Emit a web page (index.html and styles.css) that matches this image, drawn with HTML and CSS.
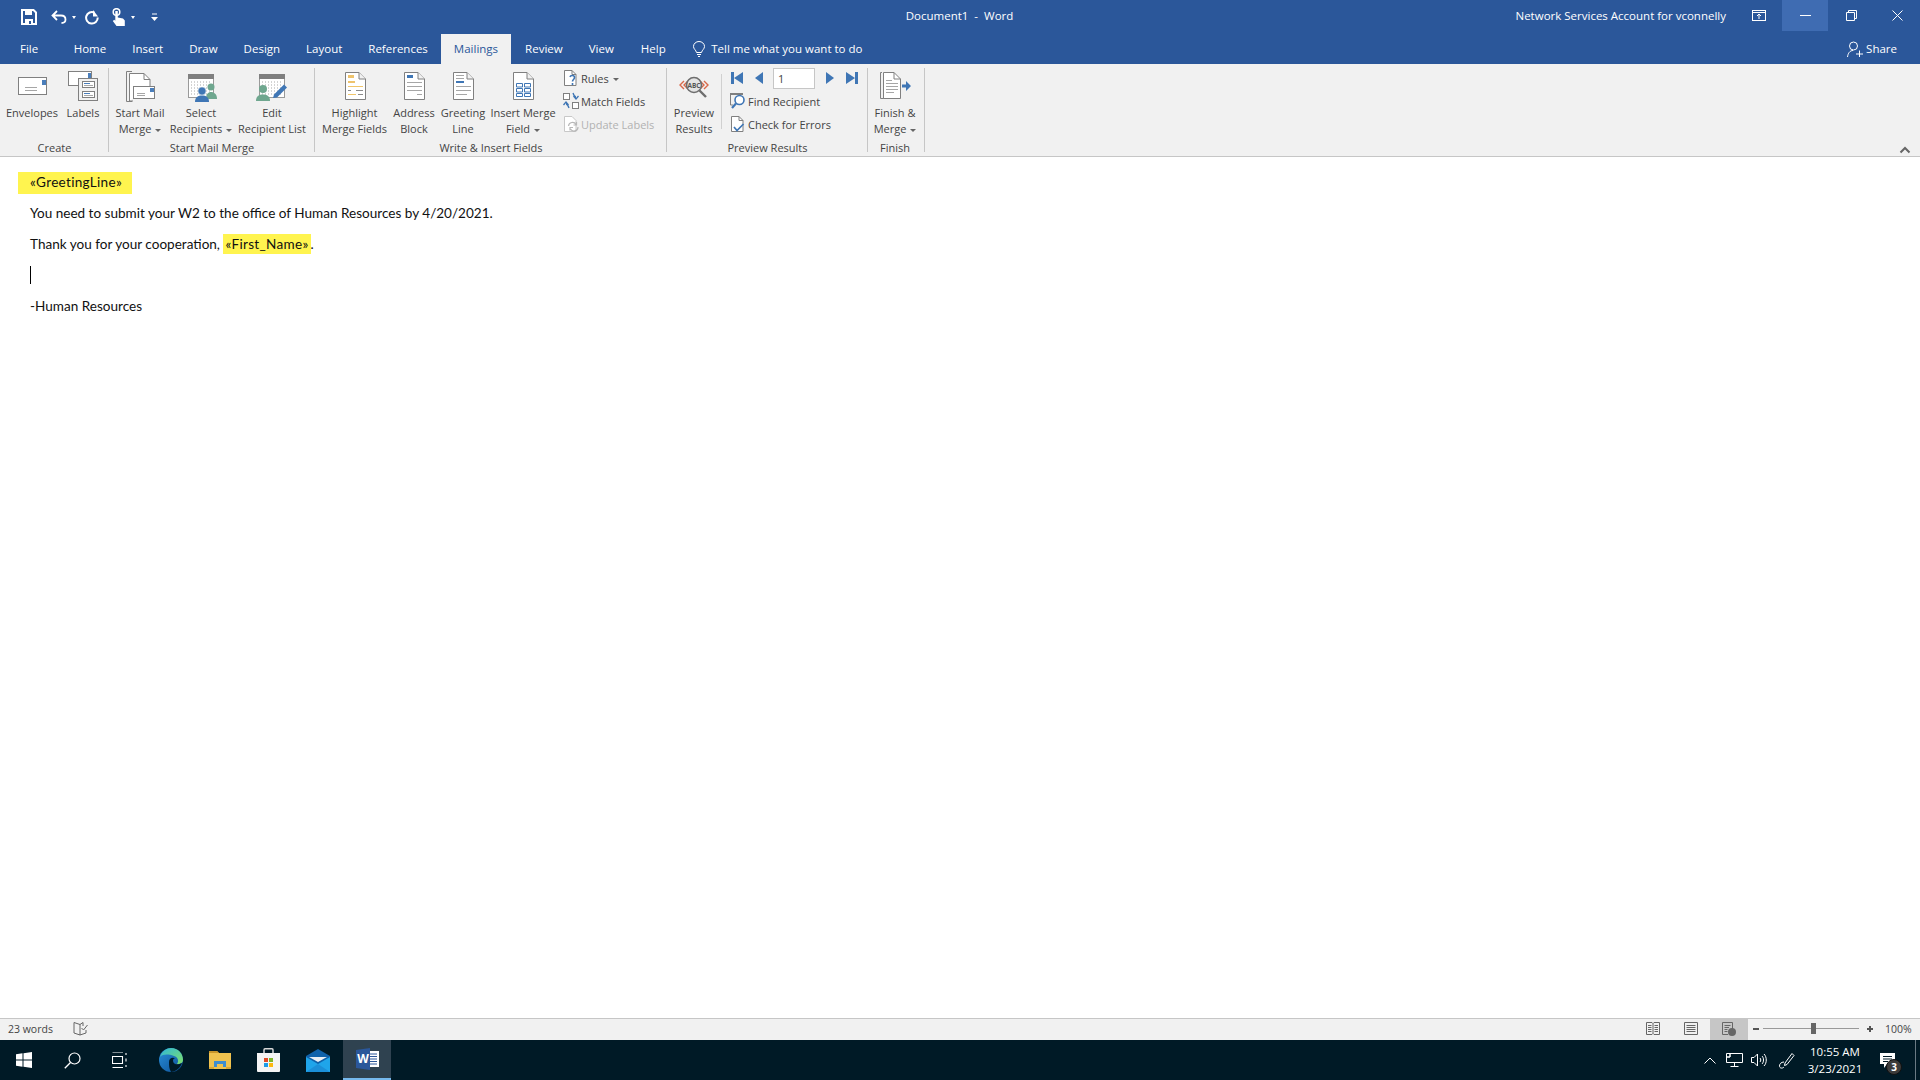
FILE: index.html
```html
<!DOCTYPE html>
<html>

<head>
    <title>Document1 - Word</title>
    <meta charset="utf-8">
    <link rel="stylesheet" href="styles.css">
</head>

<body>
    <svg class="defs" width="0" height="0">
        <symbol id="page" viewBox="0 0 32 36">
            <path d="M6.5 4.5H20L26.5 11V31.5H6.5Z" fill="#fff" stroke="#808080" />
            <path d="M20 4.5V11H26.5" fill="#f1f1f1" stroke="#808080" />
        </symbol>
        <symbol id="calendar" viewBox="0 0 32 36">
            <rect x="3.5" y="6.5" width="25" height="23" fill="#fff" stroke="#9a9a9a" />
            <rect x="3" y="6" width="26" height="5" fill="#7f7f7f" />
            <path d="M6 14H27M6 17H27M6 20H27M6 23H27M6 26H27" stroke="#a8a8a8" stroke-dasharray="1 2" />
        </symbol>
    </svg>

    <header class="titlebar">
        <div class="qat">
            <svg class="save" width="16" height="16" viewBox="0 0 16 16"><path d="M1 1H12.5L15 3.5V15H1Z" fill="none" stroke="#fff" stroke-width="2" /><rect x="4" y="1" width="7" height="5" fill="#fff" /><rect x="4" y="10" width="8" height="5" fill="#fff" /><rect x="8" y="12" width="2" height="3" fill="#2b579a" /></svg>
            <svg class="undo" width="16" height="14" viewBox="0 0 16 14"><path d="M6 1L1.5 5.5L6 10M2 5.5H10C13 5.5 14.5 7.5 14.5 9.5S13 13 10.5 13" fill="none" stroke="#fff" stroke-width="1.8" /></svg>
            <span class="caret white undo-caret"></span>
            <svg class="redo" width="14" height="15" viewBox="0 0 14 15"><path d="M9.5 2.6A5.8 5.8 0 1 0 12.7 7.5" fill="none" stroke="#fff" stroke-width="2" /><path d="M8 0V6.5H13Z" fill="#fff" /></svg>
            <svg class="touch" width="13" height="18" viewBox="0 0 13 18"><circle cx="4.500" cy="4" r="3.300" fill="none" stroke="#fff" stroke-width="1.500" /><path d="M3.300 3H5.800V9.500L11 10.500 12.800 12.500V18H4.500L.8 13 2.200 11.800 3.300 12.800Z" fill="#fff" /></svg>
            <span class="caret white touch-caret"></span>
            <svg class="customize" width="7" height="8" viewBox="0 0 7 8"><path d="M1 1H6" stroke="#fff" /><path d="M0 4H7L3.5 8Z" fill="#fff" /></svg>
        </div>
        <div class="doc-title">Document1&nbsp; -&nbsp; Word</div>
        <div class="window-area">
            <span class="account">Network Services Account for vconnelly</span>
            <svg class="display-opts" width="14" height="11" viewBox="0 0 14 11"><rect x=".5" y=".5" width="13" height="10" fill="none" stroke="#fff" /><path d="M.5 2.5H13.5M7 9V4.5M5 6L7 4L9 6" fill="none" stroke="#fff" /></svg>
            <div class="win-btn hover"><svg width="11" height="11" viewBox="0 0 11 11"><path d="M0 5.5H11" stroke="#fff" /></svg></div>
            <div class="win-btn"><svg width="11" height="11" viewBox="0 0 11 11"><path d="M.5 2.5H8.5V10.5H.5ZM2.5 2.5V.5H10.5V8.5H8.5" fill="none" stroke="#fff" /></svg></div>
            <div class="win-btn"><svg width="11" height="11" viewBox="0 0 11 11"><path d="M.5 .5L10.5 10.5M10.5 .5L.5 10.5" stroke="#fff" /></svg></div>
        </div>
    </header>

    <nav class="tabs">
        <a class="tab file">File</a>
        <a class="tab">Home</a>
        <a class="tab">Insert</a>
        <a class="tab">Draw</a>
        <a class="tab">Design</a>
        <a class="tab">Layout</a>
        <a class="tab">References</a>
        <a class="tab active">Mailings</a>
        <a class="tab">Review</a>
        <a class="tab">View</a>
        <a class="tab help">Help</a>
        <div class="tell">
            <svg width="12" height="16" viewBox="0 0 12 16"><path d="M3.5 11.5C3 9 .5 8 .5 5.5A5.5 5 0 0 1 11.5 5.5C11.5 8 9 9 8.500 11.500ZM4 13.500H8M5 15.500H7" fill="none" stroke="#fff" /></svg>
            <span>Tell me what you want to do</span>
        </div>
        <div class="share">
            <svg width="16" height="16" viewBox="0 0 16 16"><circle cx="6.500" cy="5" r="4" fill="none" stroke="#fff" /><path d="M.5 16C1 12 3 9.500 6 9.500M9 13H16M12.500 9.500V16" fill="none" stroke="#fff" /></svg>
            <span>Share</span>
        </div>
    </nav>

    <section class="ribbon">
        <div class="group g-create">
            <div class="group-body">
                <div class="big w-envelopes">
                    <svg class="icon" viewBox="0 0 32 36"><rect x="2.500" y="9.500" width="28" height="17" fill="#fff" stroke="#808080" /><rect x="26" y="12" width="4" height="5" fill="#4a7ebb" /><path d="M9 19.500H21M9 22.500H21" stroke="#a6a6a6" /></svg>
                    <span>Envelopes</span>
                </div>
                <div class="big w-labels">
                    <svg class="icon" viewBox="0 0 32 36"><rect x="1.500" y="3.500" width="23" height="14" fill="#fff" stroke="#808080" /><rect x="21" y="5" width="3" height="5" fill="#4a7ebb" /><rect x="11.500" y="10.500" width="19" height="22" fill="#f1f1f1" stroke="#808080" /><rect x="15.500" y="13.500" width="12" height="6" fill="#fff" stroke="#808080" /><rect x="15.500" y="23.500" width="12" height="6" fill="#fff" stroke="#808080" /><path d="M17 15.500H23M17 25.500H23" stroke="#4a7ebb" /><path d="M17 17.500H26M17 27.500H26" stroke="#a6a6a6" /></svg>
                    <span>Labels</span>
                </div>
            </div>
            <div class="group-label">Create</div>
        </div>

        <div class="group g-merge">
            <div class="group-body">
                <div class="big w-start">
                    <svg class="icon" viewBox="0 0 32 36"><path d="M8 3.500H2.500V33.500H8" fill="none" stroke="#808080" /><path d="M5.500 33V5.500H20L26 11.500V18M5.500 33H9" fill="#fff" stroke="#808080" /><path d="M20 5.500V11.500H26" fill="none" stroke="#808080" /><rect x="9.500" y="18.500" width="21" height="12" fill="#fff" stroke="#808080" /><rect x="26" y="20" width="4" height="4" fill="#4a7ebb" /><path d="M13 25.500H21M13 27.500H21" stroke="#a6a6a6" /></svg>
                    <span>Start Mail<br>Merge<i class="caret"></i></span>
                </div>
                <div class="big w-select">
                    <svg class="icon" viewBox="0 0 32 36"><use href="#calendar" width="32" height="36" /><circle cx="26" cy="19" r="3.500" fill="#6fa78f" /><path d="M21 31C21 26 23 24 26 24S32 26 32 31Z" fill="#6fa78f" /><circle cx="17" cy="23" r="4" fill="#3f76b5" stroke="#f1f1f1" stroke-width=".5" /><path d="M10 34C10 29 13 27.500 17 27.500S24 29 24 34Z" fill="#3f76b5" /></svg>
                    <span>Select<br>Recipients<i class="caret"></i></span>
                </div>
                <div class="big w-edit">
                    <svg class="icon" viewBox="0 0 32 36"><use href="#calendar" width="32" height="36" /><circle cx="7" cy="21" r="4" fill="#6fa78f" /><path d="M0 33C0 28 3 26.500 7 26.500S14 28 14 33Z" fill="#6fa78f" /><path d="M17 30L18 26.500L28 16.500L31 19.500L21 29.500Z" fill="#3f76b5" /></svg>
                    <span>Edit<br>Recipient List</span>
                </div>
            </div>
            <div class="group-label">Start Mail Merge</div>
        </div>

        <div class="group g-fields">
            <div class="group-body">
                <div class="big w-highlight">
                    <svg class="icon" viewBox="0 0 32 36"><use href="#page" width="32" height="36" /><path d="M9 7H15V10H9ZM9 13H16V15H9Z" fill="#eec36d" /><path d="M9 18.500H24M9 26.500H17" stroke="#f0c56a" /><path d="M9 22.500H12M17 22.500H24M19 26.500H24" stroke="#8a8a8a" /></svg>
                    <span>Highlight<br>Merge Fields</span>
                </div>
                <div class="big w-address">
                    <svg class="icon" viewBox="0 0 32 36"><use href="#page" width="32" height="36" /><rect x="9" y="7" width="6" height="3" fill="#3f76b5" /><path d="M9 14.500H24M9 18.500H24M9 22.500H24M19 26.500H24" stroke="#a6a6a6" /></svg>
                    <span>Address<br>Block</span>
                </div>
                <div class="big w-greeting">
                    <svg class="icon" viewBox="0 0 32 36"><use href="#page" width="32" height="36" /><rect x="9" y="13" width="8" height="2" fill="#3f76b5" /><path d="M9 7.500H17M9 10.500H17M9 18.500H24M9 22.500H24M9 26.500H20" stroke="#a6a6a6" /></svg>
                    <span>Greeting<br>Line</span>
                </div>
                <div class="big w-insert">
                    <svg class="icon" viewBox="0 0 32 36"><use href="#page" width="32" height="36" /><path d="M9.500 15.500H15.500V19H9.500ZM17.500 15.500H23.500V19H17.500ZM9.500 20.500H15.500V24H9.500ZM17.500 20.500H23.500V24H17.500ZM9.500 25.500H15.500V28.500H9.500ZM17.500 25.500H23.500V28.500H17.500Z" fill="#fff" stroke="#3f76b5" /></svg>
                    <span>Insert Merge<br>Field<i class="caret"></i></span>
                </div>
                <div class="small-col">
                    <div class="small">
                        <svg width="16" height="18" viewBox="0 0 16 18"><path d="M1.500 1.500H9L13 5.500V16.500H1.500Z" fill="#fff" stroke="#808080" /><path d="M9 1.500V5.500H13" fill="none" stroke="#808080" /><path d="M7 8C7.500 6 11.500 6 11.500 8.500C11.500 10.500 9.500 10.500 9.500 12.500M9.500 14V16" fill="none" stroke="#3f76b5" stroke-width="1.600" /></svg>
                        <span>Rules<i class="caret"></i></span>
                    </div>
                    <div class="small">
                        <svg width="16" height="18" viewBox="0 0 16 18"><rect x=".5" y="1.500" width="6" height="6" fill="#fff" stroke="#808080" /><rect x="9.500" y="10.500" width="6" height="6" fill="#fff" stroke="#808080" /><path d="M10 1C11 4 12 5 13 5M15.500 4L13 7L10.500 4M6 16C5 13 4 12 3 12M.5 13L3 10L5.500 13" fill="none" stroke="#3f76b5" stroke-width="1.300" /></svg>
                        <span>Match Fields</span>
                    </div>
                    <div class="small disabled">
                        <svg width="16" height="18" viewBox="0 0 16 18"><path d="M1.500 1.500H9L13 5.500V16.500H1.500Z" fill="#fff" stroke="#c8c8c8" /><path d="M5.500 11A4 4 0 0 1 13 9.500M15 12A4 4 0 0 1 7.500 14M13.500 7V10H10.500M7 15.500V12.500H10" fill="none" stroke="#b8b8b8" stroke-width="1.200" /></svg>
                        <span>Update Labels</span>
                    </div>
                </div>
            </div>
            <div class="group-label">Write &amp; Insert Fields</div>
        </div>

        <div class="group g-preview">
            <div class="group-body">
                <div class="big w-preview">
                    <svg class="icon" viewBox="0 0 32 36"><path d="M6 13L2 17L6 21M10 13L6 17L10 21M22 13L26 17L22 21M26 13L30 17L26 21" fill="none" stroke="#d9694a" stroke-width="1.400" /><circle cx="16" cy="17" r="7.500" fill="#e4e4e4" stroke="#6e6e6e" stroke-width="1.600" /><path d="M21.500 22.500L28 29" stroke="#6e6e6e" stroke-width="2.400" /><text class="abc" x="16" y="19.500" text-anchor="middle">ABC</text></svg>
                    <span>Preview<br>Results</span>
                </div>
                <span class="inner-sep"></span>
                <div class="preview-col">
                    <div class="nav-row">
                        <svg class="nav-first" width="12" height="12" viewBox="0 0 12 12"><path d="M0 0H3V12H0ZM12 0V12L3 6Z" fill="#3f76b5" /></svg>
                        <svg class="nav-prev" width="8" height="12" viewBox="0 0 8 12"><path d="M8 0V12L0 6Z" fill="#3f76b5" /></svg>
                        <div class="record">1</div>
                        <svg class="nav-next" width="8" height="12" viewBox="0 0 8 12"><path d="M0 0V12L8 6Z" fill="#3f76b5" /></svg>
                        <svg class="nav-last" width="12" height="12" viewBox="0 0 12 12"><path d="M0 0L9 6L0 12ZM9 0H12V12H9Z" fill="#3f76b5" /></svg>
                    </div>
                    <div class="small">
                        <svg width="17" height="18" viewBox="0 0 17 18"><path d="M1 2H14" stroke="#7f7f7f" stroke-width="2" /><path d="M1.500 3V13H4" fill="none" stroke="#808080" /><circle cx="10.500" cy="8" r="4.500" fill="#fff" stroke="#3f76b5" stroke-width="1.600" /><path d="M7 11.500L3 16" stroke="#3f76b5" stroke-width="2.200" /></svg>
                        <span>Find Recipient</span>
                    </div>
                    <div class="small">
                        <svg width="17" height="18" viewBox="0 0 17 18"><path d="M2.500 1.500H10L14 5.500V16.500H2.500Z" fill="#fff" stroke="#808080" /><path d="M10 1.500V5.500H14" fill="none" stroke="#808080" /><path d="M5 12L8 15.500L14.500 9" fill="none" stroke="#3f76b5" stroke-width="1.700" /></svg>
                        <span>Check for Errors</span>
                    </div>
                </div>
            </div>
            <div class="group-label">Preview Results</div>
        </div>

        <div class="group g-finish">
            <div class="group-body">
                <div class="big w-finish">
                    <svg class="icon" viewBox="0 0 32 36"><path d="M3 4.500H1.500V30.500H5" fill="none" stroke="#808080" /><path d="M4.500 4.500H15L21.500 11V30.500H4.500Z" fill="#fff" stroke="#808080" /><path d="M15 4.500V11H21.500" fill="none" stroke="#808080" /><path d="M7 12.500H13M7 15.500H19M7 18.500H19M7 21.500H19M7 24.500H15" stroke="#a6a6a6" /><path d="M23 16.500H27V13L32 18L27 23V19.500H23Z" fill="#3f76b5" /></svg>
                    <span>Finish &amp;<br>Merge<i class="caret"></i></span>
                </div>
            </div>
            <div class="group-label">Finish</div>
        </div>

        <svg class="collapse" width="12" height="8" viewBox="0 0 12 8"><path d="M1.500 6.500L6 2L10.500 6.500" fill="none" stroke="#666" stroke-width="2" /></svg>
    </section>

    <main class="document">
        <p><span class="field greeting">«GreetingLine»</span></p>
        <p>You need to submit your W2 to the office of Human Resources by 4/20/2021.</p>
        <p>Thank you for your cooperation, <span class="field">«First_Name»</span>.</p>
        <p class="cursor-line"><span class="cursor"></span></p>
        <p>-Human Resources</p>
    </main>

    <footer class="statusbar">
        <span class="words">23 words</span>
        <svg class="proof" width="15" height="14" viewBox="0 0 15 14"><path d="M7 2.500L1 .5V11L7 13ZM7 2.500L10 .5V4M7 13L13 11V8" fill="none" stroke="#666" /><path d="M8.500 6L10.500 8L14.500 3" fill="none" stroke="#666" /></svg>
        <div class="status-right">
            <svg class="view" width="14" height="13" viewBox="0 0 14 13"><path d="M.5 .5H6L7 1.500L8 .5H13.500V12.500H8L7 11.500L6 12.500H.5ZM7 1.500V11.500M2 3.500H5.500M2 5.500H5.500M2 7.500H5.500M2 9.500H5.500M8.500 3.500H12M8.500 5.500H12M8.500 7.500H12M8.500 9.500H12" fill="none" stroke="#666" /></svg>
            <svg class="view" width="14" height="13" viewBox="0 0 14 13"><path d="M.5 .5H13.500V12.500H.5ZM2.500 3.500H11.500M2.500 5.500H11.500M2.500 7.500H11.500M2.500 9.500H11.500" fill="none" stroke="#666" /></svg>
            <div class="view-on"><svg width="14" height="14" viewBox="0 0 14 14"><path d="M.5 .5H10.500V7M.5 .5V12.500H6M2.500 3.500H8.500M2.500 5.500H7M2.500 7.500H5.500M2.500 9.500H5.500" fill="none" stroke="#666" /><circle cx="10" cy="10" r="4" fill="#666" /></svg></div>
            <div class="zoom">
                <span class="zoom-minus"></span>
                <div class="slider"><span class="thumb"></span></div>
                <span class="zoom-plus"></span>
            </div>
            <span class="percent">100%</span>
        </div>
    </footer>

    <footer class="taskbar">
        <div class="task"><svg width="16" height="16" viewBox="0 0 16 16"><path d="M0 2.300L6.500 1.300V7.500H0ZM7.500 1.200L16 0V7.500H7.500ZM0 8.500H6.500V14.700L0 13.700ZM7.500 8.500H16V16L7.500 14.800Z" fill="#fff" /></svg></div>
        <div class="task"><svg width="17" height="17" viewBox="0 0 17 17"><circle cx="10.500" cy="6.500" r="5.500" fill="none" stroke="#fff" stroke-width="1.200" /><path d="M6.500 10.500L.8 16.200" stroke="#fff" stroke-width="1.300" /></svg></div>
        <div class="task taskview"><svg width="16" height="16" viewBox="0 0 16 16"><path d="M.5 0H11M.5 15.500H11M.5 4.500H10.500V11.500H.5ZM14 1V3M14 6.500V9.500M14 13V15" fill="none" stroke="#fff" stroke-width="1.100" /></svg></div>
        <div class="task"><svg width="24" height="24" viewBox="0 0 24 24"><defs><linearGradient id="edge" x1="0" y1="0" x2="1" y2="1"><stop offset="0" stop-color="#2a8fd8" /><stop offset="1" stop-color="#0b4f96" /></linearGradient><linearGradient id="edge2" x1="0" y1="0" x2="1" y2="1"><stop offset="0" stop-color="#2fb7d8" /><stop offset="1" stop-color="#7fe06a" /></linearGradient></defs><circle cx="12" cy="12" r="12" fill="url(#edge)" /><path d="M1 9C3 3 8 0 12 0C19 0 24 5 24 12C24 15 21 16.500 18 16C20 13 19 9 15 8C9 6 4 6 1 9Z" fill="url(#edge2)" /><path d="M10 14C10 10 14 9 16 10.500C14 10.500 13.500 12.500 14.500 14.500C15.500 16.500 19 17 23 15C21 21 15 24 12 24C10 21 10 17 10 14Z" fill="#001a26" /></svg></div>
        <div class="task"><svg width="22" height="18" viewBox="0 0 22 18"><path d="M0 0H8L10 2H22V18H0Z" fill="#f0c34f" /><path d="M0 0H8L10 2H0Z" fill="#c9962a" /><path d="M5 16V10H17V16H14V13H8V16Z" fill="#3f8ed0" /><path d="M0 16H5V18H0ZM17 16H22V18H17Z" fill="#d9a838" /></svg></div>
        <div class="task"><svg width="23" height="24" viewBox="0 0 23 24"><path d="M7 7V2Q7 .8 8 .8H15Q16 .8 16 2V7" fill="none" stroke="#d8d8d8" stroke-width="1.500" /><path d="M0 5H23V23Q23 24 22 24H1Q0 24 0 23Z" fill="#f4f4f4" /><rect x="7" y="10" width="4" height="4" fill="#e24a26" /><rect x="12" y="10" width="4" height="4" fill="#7fb72a" /><rect x="7" y="15" width="4" height="4" fill="#1c9be8" /><rect x="12" y="15" width="4" height="4" fill="#fcb80f" /></svg></div>
        <div class="task"><svg width="24" height="23" viewBox="0 0 24 23"><path d="M0 7L12 0L24 7V10L12 16L0 10Z" fill="#0f62ab" /><path d="M3 8H21L12 13Z" fill="#e8eef4" /><path d="M0 8L12 15L24 8V23H0Z" fill="#1fa5ea" /><path d="M0 23L12 15L24 23Z" fill="#1b8fd8" /></svg></div>
        <div class="task word"><svg width="23" height="22" viewBox="0 0 23 22"><rect x="11" y="3" width="12" height="16" fill="#fff" /><path d="M13 6H21M13 8.500H21M13 11H21M13 13.500H21M13 16H21" stroke="#2b579a" /><path d="M0 2L14 0V22L0 20Z" fill="#2b579a" /><text class="word-w" x="7" y="14.500" text-anchor="middle">W</text></svg></div>
        <div class="tray">
            <svg class="tray-chevron" width="12" height="7" viewBox="0 0 12 7"><path d="M.5 6.500L6 1L11.500 6.500" fill="none" stroke="#fff" /></svg>
            <svg class="tray-net" width="17" height="14" viewBox="0 0 17 14"><path d="M4 .5H16.500V9.500H.5V4H4ZM8.500 9.500V13M4.500 13.500H12.500M.5 .5H4V4H.5Z" fill="none" stroke="#fff" /></svg>
            <svg class="tray-sound" width="16" height="14" viewBox="0 0 16 14"><path d="M.5 4.500H3L6.500 1V13L3 9.500H.5ZM9 5C10 6 10 8 9 9M11 3C13 5 13 9 11 11M13 1C16 4 16 10 13 13" fill="none" stroke="#fff" /></svg>
            <svg class="tray-pen" width="16" height="17" viewBox="0 0 16 17"><path d="M6 11L13 1.500L15 3.500L8 12.500L5.500 13.500ZM5 10C2 10 .5 12 .5 14S3 17 5 15" fill="none" stroke="#fff" /></svg>
            <div class="clock"><div>10:55 AM</div><div>3/23/2021</div></div>
            <div class="notify">
                <svg width="15" height="15" viewBox="0 0 15 15"><path d="M0 0H15V11H7L4 15V11H0Z" fill="#fff" /><path d="M3 3.500H12M3 6H12M3 8.500H8" stroke="#001a26" /></svg>
                <span class="badge">3</span>
            </div>
            <span class="show-desktop"></span>
        </div>
    </footer>
</body></html>
```

FILE: styles.css
```css
* {
    box-sizing: border-box;
}

html,
body {
    margin: 0;
    height: 1080px;
    overflow: hidden;
}

body {
    display: flex;
    flex-direction: column;
    background: white;
    font-family: "Open Sans", sans-serif;
    font-size: 11px;
    color: #444;
}

.defs {
    position: absolute;
}

svg {
    display: block;
    flex: none;
}

/* title bar */
.titlebar {
    height: 34px;
    background: #2b579a;
    color: white;
    display: flex;
    align-items: flex-start;
    position: relative;
}

.qat {
    width: 600px;
    height: 34px;
    display: flex;
    align-items: center;
    padding-left: 21px;
}

.undo {
    margin-left: 14px;
}

.qat .undo-caret {
    margin-left: 5px;
}

.redo {
    margin-left: 9px;
}

.touch {
    margin-left: 13px;
}

.qat .touch-caret {
    margin-left: 6px;
}

.customize {
    margin-left: 16px;
}

.doc-title {
    width: 719px;
    height: 31px;
    line-height: 32px;
    text-align: center;
    font-size: 11.5px;
}

.window-area {
    flex: 1;
    display: flex;
    align-items: center;
    justify-content: flex-end;
    height: 31px;
}

.account {
    font-size: 11.5px;
    margin-right: 26px;
}

.display-opts {
    margin-right: 16px;
}

.win-btn {
    width: 46px;
    height: 31px;
    display: flex;
    align-items: center;
    justify-content: center;
}

.win-btn.hover {
    background: #3f6cb2;
}

/* tabs */
.tabs {
    height: 30px;
    background: #2b579a;
    color: white;
    display: flex;
    align-items: stretch;
    font-size: 11.5px;
}

.tab {
    padding: 0 13px;
    line-height: 29px;
    white-space: nowrap;
}

.tab.file {
    padding: 0 22.5px 0 20px;
}

.tab.active {
    background: #f1f1f1;
    color: #2b579a;
    margin-right: 1px;
}

.tab.help {
    margin-left: 1px;
}

.tell {
    display: flex;
    align-items: center;
    gap: 6px;
    margin-left: 14.5px;
    padding-bottom: 1px;
}

.share {
    margin-left: auto;
    display: flex;
    align-items: center;
    gap: 3px;
    padding-right: 23px;
    padding-bottom: 1px;
}

/* ribbon */
.ribbon {
    height: 93px;
    background: #f1f1f1;
    border-bottom: 1px solid #c6c6c6;
    display: flex;
    position: relative;
}

.group {
    display: flex;
    flex-direction: column;
    position: relative;
}

.group::after {
    content: "";
    position: absolute;
    right: 0;
    top: 4px;
    bottom: 4px;
    width: 1px;
    background: #c6c6c6;
}

.g-create {
    width: 109px;
}

.g-merge {
    width: 206px;
    padding-left: 6px;
}

.g-fields {
    width: 352px;
    padding-left: 6px;
}

.g-preview {
    width: 201px;
}

.g-finish {
    width: 57px;
}

.group-body {
    height: 73px;
    display: flex;
}

.group-label {
    height: 16px;
    margin-top: 3px;
    line-height: 16px;
    text-align: center;
}

.g-merge .group-label,
.g-fields .group-label {
    margin-left: -6px;
}

.g-finish .group-label {
    padding-right: 3px;
}

.big {
    display: flex;
    flex-direction: column;
    align-items: center;
    text-align: center;
    line-height: 16px;
    white-space: nowrap;
    padding-top: 4px;
}

.big .icon {
    width: 32px;
    height: 36px;
    margin-bottom: 1px;
}

.w-envelopes {
    width: 64px;
}

.w-labels {
    width: 38px;
}

.w-start {
    width: 50px;
}

.w-select {
    width: 72px;
}

.w-edit {
    width: 70px;
}

.w-highlight {
    width: 67px;
}

.w-address {
    width: 52px;
}

.w-greeting {
    width: 46px;
}

.w-insert {
    width: 74px;
}

.w-preview {
    width: 54px;
}

.w-finish {
    width: 54px;
}

.caret {
    display: inline-block;
    width: 0;
    height: 0;
    margin-left: 4px;
    vertical-align: middle;
    border-left: 3px solid transparent;
    border-right: 3px solid transparent;
    border-top: 3px solid #666;
}

.caret.white {
    border-left-width: 2.5px;
    border-right-width: 2.5px;
    border-top-color: white;
    margin-top: 1px;
}

.small-col {
    display: flex;
    flex-direction: column;
    padding-top: 2.5px;
    margin-left: 3px;
}

.small {
    height: 23px;
    display: flex;
    align-items: center;
    gap: 2px;
    white-space: nowrap;
}

.disabled {
    color: #b1b1b1;
}

.inner-sep {
    width: 1px;
    height: 55px;
    margin-top: 10px;
    background: #d0d0d0;
}

.preview-col {
    display: flex;
    flex-direction: column;
    padding-top: 2.5px;
    padding-left: 7px;
}

.nav-row {
    height: 23px;
    display: flex;
    align-items: center;
    padding-left: 2px;
}

.nav-prev {
    margin-left: 12px;
}

.record {
    width: 42px;
    height: 21px;
    margin-left: 10px;
    padding-left: 4px;
    line-height: 20px;
    background: white;
    border: 1px solid #c6c6c6;
}

.nav-next {
    margin-left: 11px;
}

.nav-last {
    margin-left: 12px;
}

.abc {
    font-family: "Open Sans", sans-serif;
    font-size: 6.5px;
    font-weight: 700;
    fill: #555;
}

.collapse {
    position: absolute;
    right: 9px;
    bottom: 2px;
}

/* document */
.document {
    flex: 1;
    padding-top: 15px;
    padding-left: 30px;
    font-family: Lato, sans-serif;
    font-size: 13.55px;
    color: #111;
}

.document p {
    margin: 0;
    height: 31px;
    line-height: 21px;
}

.document .cursor-line {
    padding-top: 1px;
}

.field {
    background: #fff44f;
    display: inline-block;
    height: 20px;
    padding: 0 2px;
    letter-spacing: .3px;
}

.field.greeting {
    height: 22px;
    margin-left: -12px;
    padding: 0 10px 0 12px;
}

.cursor {
    display: block;
    width: 1px;
    height: 18px;
    background: black;
}

/* status bar */
.statusbar {
    height: 22px;
    background: #f1f1f1;
    border-top: 1px solid #c6c6c6;
    display: flex;
    align-items: center;
    padding-left: 8px;
    font-size: 10.5px;
    color: #444;
}

.words,
.percent {
    margin-bottom: 2px;
}

.proof {
    margin-left: 20px;
    margin-bottom: 2px;
}

.status-right {
    margin-left: auto;
    display: flex;
    align-items: center;
    height: 100%;
    padding-right: 8px;
}

.view {
    margin-right: 24px;
    margin-bottom: 2px;
}

.view-on {
    width: 38px;
    height: 100%;
    margin-left: -12px;
    padding-bottom: 2px;
    background: #c6c6c6;
    display: flex;
    align-items: center;
    justify-content: center;
}

.zoom {
    display: flex;
    align-items: center;
    margin-left: 5px;
    margin-bottom: 2px;
}

.zoom-minus,
.zoom-plus {
    display: block;
    width: 6px;
    height: 2px;
    background: #555;
    position: relative;
}

.zoom-plus::after {
    content: "";
    position: absolute;
    left: 2px;
    top: -2px;
    width: 2px;
    height: 6px;
    background: #555;
}

.slider {
    width: 96px;
    height: 1px;
    margin: 0 8px 0 4px;
    background: #999;
    position: relative;
}

.thumb {
    position: absolute;
    left: 48px;
    top: -5px;
    width: 5px;
    height: 11px;
    background: #666;
}

.percent {
    margin-left: 12px;
    width: 27px;
    white-space: nowrap;
}

/* taskbar */
.taskbar {
    height: 40px;
    background: #001a26;
    display: flex;
    color: white;
}

.task {
    width: 48px;
    height: 40px;
    display: flex;
    align-items: center;
    justify-content: center;
}

.taskview {
    margin-right: 2px;
}

.task:nth-child(n+4) {
    width: 49px;
}

.task.word {
    width: 48px;
    margin-left: 1px;
    background: #2f4250;
    border-bottom: 2px solid #76b9ed;
}

.word-w {
    font-family: "Open Sans", sans-serif;
    font-size: 12px;
    font-weight: 700;
    fill: white;
}

.tray {
    margin-left: auto;
    display: flex;
    align-items: center;
}

.tray-net {
    margin-left: 10px;
}

.tray-sound {
    margin-left: 8px;
}

.tray-pen {
    margin-left: 12px;
}

.clock {
    width: 74px;
    margin-left: 3px;
    text-align: center;
    font-size: 11.5px;
    line-height: 17px;
}

.notify {
    width: 37px;
    margin-left: 6px;
    height: 40px;
    display: flex;
    align-items: center;
    position: relative;
    padding-left: 2px;
}

.badge {
    position: absolute;
    left: 8px;
    top: 19px;
    width: 16px;
    height: 16px;
    border-radius: 50%;
    background: #3c3c3c;
    border: 1px solid #111;
    text-align: center;
    font-size: 10px;
    font-weight: 700;
    line-height: 14px;
}

.show-desktop {
    width: 5px;
    height: 40px;
    border-left: 1px solid #6a7a84;
}
```
